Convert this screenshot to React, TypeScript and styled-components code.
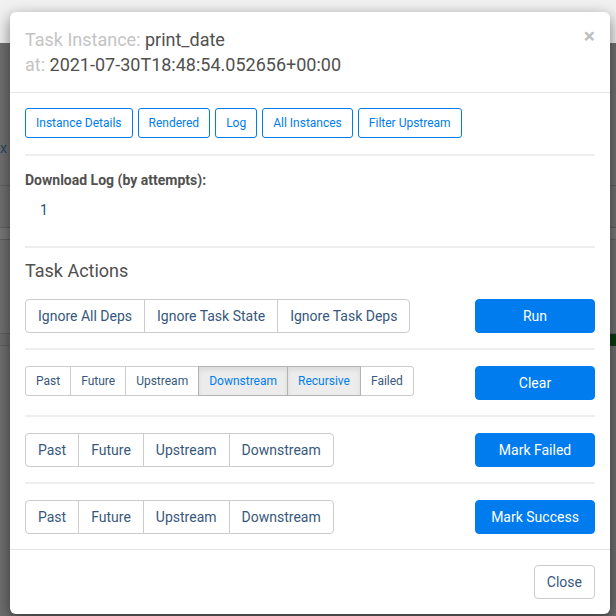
import styled, { createGlobalStyle } from 'styled-components'

const GlobalStyle = createGlobalStyle`
  html, body {
    margin: 0;
    padding: 0;
    height: 100%;
  }
  body {
    font-family: Roboto, "Helvetica Neue", Arial, sans-serif;
    font-size: 14px;
    color: #51504f;
    background: #6f6f6f;
    overflow: hidden;
  }
  * {
    box-sizing: border-box;
  }
`

const Backdrop = styled.div`
  width: 616px;
  height: 616px;
  background: #6f6f6f;
  display: flex;
  flex-direction: column;
`

const BackdropBar = styled.div`
  height: 43px;
  background: #f1f1f1;
`

const BackdropRow = styled.div<{ $height: number; $tone?: string }>`
  height: ${(p) => p.$height}px;
  background: ${(p) => p.$tone || '#707070'};
  border-bottom: 1px solid #606060;
  display: flex;
  align-items: center;
  justify-content: flex-end;
`

const BackdropText = styled.span`
  margin-right: auto;
  margin-top: 67px;
  color: #2a4663;
  font-size: 14px;
`

const BackdropStatus = styled.span`
  width: 8px;
  height: 12px;
  background: #0b3a10;
`

const Modal = styled.div`
  position: absolute;
  top: 12px;
  left: 10px;
  width: 600px;
  background: #fff;
  border-radius: 6px;
  box-shadow: 0 5px 15px rgba(0, 0, 0, 0.5);
`

const Header = styled.div`
  padding: 15px;
  border-bottom: 1px solid #e5e5e5;
  display: flex;
  justify-content: space-between;
  align-items: flex-start;
`

const Title = styled.h4`
  margin: 0;
  font-size: 18px;
  font-weight: 400;
  line-height: 25px;
  color: #51504f;
`

const Muted = styled.span`
  color: #c4c4c4;
`

const CloseX = styled.button`
  border: 0;
  background: none;
  padding: 0;
  margin-top: -1px;
  font-family: inherit;
  font-size: 21px;
  font-weight: 700;
  line-height: 1;
  color: #000;
  opacity: 0.25;
  cursor: pointer;
`

const Body = styled.div`
  padding: 15px;
`

const NavButtons = styled.div`
  display: flex;
  gap: 5px;
`

const NavButton = styled.a`
  display: inline-block;
  padding: 5px 10px;
  font-size: 12px;
  line-height: 18px;
  color: #017cee;
  background: #fff;
  border: 1px solid #017cee;
  border-radius: 3px;
  cursor: pointer;
`

const Divider = styled.hr<{ $top: number; $bottom: number }>`
  border: 0;
  border-top: 2px solid #eee;
  margin: ${(p) => p.$top}px 0 ${(p) => p.$bottom}px;
`

const FieldLabel = styled.label`
  display: block;
  font-weight: 700;
  line-height: 20px;
  margin-bottom: 10px;
`

const AttemptList = styled.div`
  padding-left: 15px;
  line-height: 20px;
`

const AttemptLink = styled.a`
  color: #24527e;
`

const SectionTitle = styled.h4`
  margin: 0 0 18px;
  font-size: 18px;
  font-weight: 400;
  line-height: 20px;
`

const ActionRow = styled.form`
  display: flex;
  justify-content: space-between;
  align-items: flex-start;
  height: 34px;
  margin: 0;
`

const ButtonGroup = styled.div`
  display: inline-flex;
`

const GroupButton = styled.label<{ $small?: boolean; $active?: boolean }>`
  padding: ${(p) => (p.$small ? '5px 10px' : '6px 12px')};
  font-size: ${(p) => (p.$small ? '12px' : '14px')};
  line-height: ${(p) => (p.$small ? '18px' : '20px')};
  color: ${(p) => (p.$active ? '#017cee' : '#37587c')};
  background: ${(p) => (p.$active ? '#ececec' : '#fff')};
  border: 1px solid ${(p) => (p.$active ? '#b3b3b3' : '#ccc')};
  box-shadow: ${(p) => (p.$active ? 'inset 0 3px 5px rgba(0, 0, 0, 0.08)' : 'none')};
  position: relative;
  z-index: ${(p) => (p.$active ? 2 : 1)};
  cursor: pointer;

  & + & {
    margin-left: -1px;
  }
  &:first-child {
    border-radius: ${(p) => (p.$small ? '3px 0 0 3px' : '4px 0 0 4px')};
  }
  &:last-child {
    border-radius: ${(p) => (p.$small ? '0 3px 3px 0' : '0 4px 4px 0')};
  }
`

const PrimaryButton = styled.button`
  width: 120px;
  padding: 6px 12px;
  font-family: inherit;
  font-size: 14px;
  line-height: 20px;
  color: #fff;
  background: #017cee;
  border: 1px solid #017cee;
  border-radius: 4px;
  cursor: pointer;
`

const Footer = styled.div`
  padding: 15px;
  border-top: 1px solid #e5e5e5;
  display: flex;
  justify-content: flex-end;
`

const DefaultButton = styled.button`
  padding: 6px 12px;
  font-family: inherit;
  font-size: 14px;
  line-height: 20px;
  color: #37587c;
  background: #fff;
  border: 1px solid #ccc;
  border-radius: 4px;
  cursor: pointer;
`

const navLinks = ['Instance Details', 'Rendered', 'Log', 'All Instances', 'Filter Upstream']
const directions = ['Past', 'Future', 'Upstream', 'Downstream']

const clearOptions = [
  { label: 'Past', active: false },
  { label: 'Future', active: false },
  { label: 'Upstream', active: false },
  { label: 'Downstream', active: true },
  { label: 'Recursive', active: true },
  { label: 'Failed', active: false },
]

export default function App() {
  return (
    <>
      <GlobalStyle />
      <Backdrop>
        <BackdropBar />
        <BackdropRow $height={143}>
          <BackdropText>x T</BackdropText>
        </BackdropRow>
        <BackdropRow $height={42} />
        <BackdropRow $height={12} $tone="#787878" />
        <BackdropRow $height={94} />
        <BackdropRow $height={12} $tone="#6c6c6c">
          <BackdropStatus />
        </BackdropRow>
      </Backdrop>

      <Modal>
        <Header>
          <Title>
            <Muted>Task Instance: </Muted>print_date
            <br />
            <Muted>at: </Muted>2021-07-30T18:48:54.052656+00:00
          </Title>
          <CloseX aria-label="Close">×</CloseX>
        </Header>

        <Body>
          <NavButtons>
            {navLinks.map((l) => (
              <NavButton key={l}>{l}</NavButton>
            ))}
          </NavButtons>
          <Divider $top={16} $bottom={14} />
          <FieldLabel>Download Log (by attempts):</FieldLabel>
          <AttemptList>
            <AttemptLink>1</AttemptLink>
          </AttemptList>
          <Divider $top={26} $bottom={13} />
          <SectionTitle>Task Actions</SectionTitle>

          <ActionRow>
            <ButtonGroup>
              <GroupButton>Ignore All Deps</GroupButton>
              <GroupButton>Ignore Task State</GroupButton>
              <GroupButton>Ignore Task Deps</GroupButton>
            </ButtonGroup>
            <PrimaryButton type="button">Run</PrimaryButton>
          </ActionRow>
          <Divider $top={15} $bottom={16} />

          <ActionRow>
            <ButtonGroup>
              {clearOptions.map((o) => (
                <GroupButton key={o.label} $small $active={o.active}>
                  {o.label}
                </GroupButton>
              ))}
            </ButtonGroup>
            <PrimaryButton type="button">Clear</PrimaryButton>
          </ActionRow>
          <Divider $top={15} $bottom={16} />

          <ActionRow>
            <ButtonGroup>
              {directions.map((d) => (
                <GroupButton key={d}>{d}</GroupButton>
              ))}
            </ButtonGroup>
            <PrimaryButton type="button">Mark Failed</PrimaryButton>
          </ActionRow>
          <Divider $top={15} $bottom={16} />

          <ActionRow>
            <ButtonGroup>
              {directions.map((d) => (
                <GroupButton key={d}>{d}</GroupButton>
              ))}
            </ButtonGroup>
            <PrimaryButton type="button">Mark Success</PrimaryButton>
          </ActionRow>
        </Body>

        <Footer>
          <DefaultButton type="button">Close</DefaultButton>
        </Footer>
      </Modal>
    </>
  )
}
